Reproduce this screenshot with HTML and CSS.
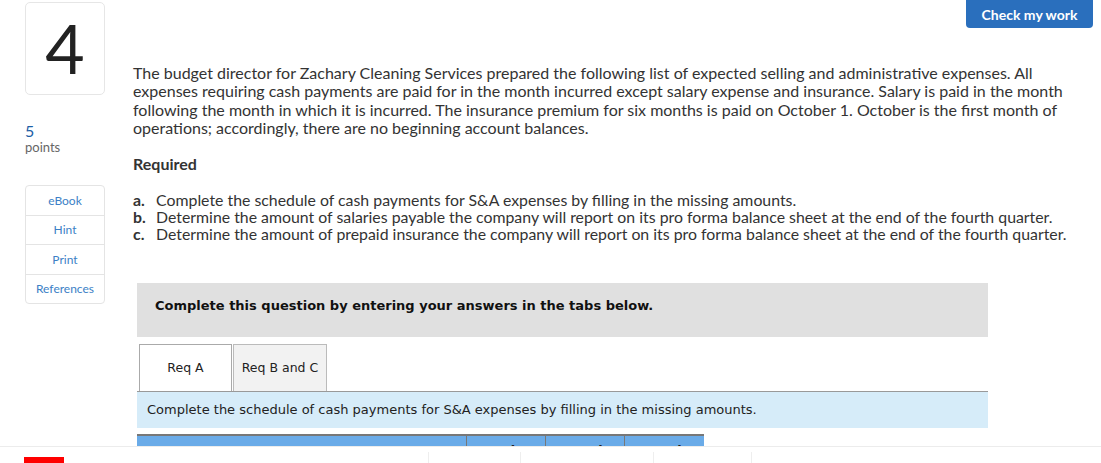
FILE: index.html
```html
<!DOCTYPE html>
<html>
<head>
<meta charset="utf-8">
<link rel="stylesheet" href="styles.css">
</head>
<body>
<div class="page">
  <aside class="side">
    <div class="qnum">4</div>
    <div class="pts"><span class="pts-n">5</span><span class="pts-l">points</span></div>
    <nav class="tools">
      <a class="tool">eBook</a>
      <a class="tool">Hint</a>
      <a class="tool">Print</a>
      <a class="tool">References</a>
    </nav>
  </aside>
  <main class="main">
    <div class="topbar"><button class="check">Check my work</button></div>
    <p class="intro">The budget director for Zachary Cleaning Services prepared the following list of expected selling and administrative expenses. All expenses requiring cash payments are paid for in the month incurred except salary expense and insurance. Salary is paid in the month following the month in which it is incurred. The insurance premium for six months is paid on October 1. October is the first month of operations; accordingly, there are no beginning account balances.</p>
    <h3 class="req">Required</h3>
    <ol class="reqs">
      <li><b>a.</b> Complete the schedule of cash payments for S&amp;A expenses by filling in the missing amounts.</li>
      <li><b>b.</b> Determine the amount of salaries payable the company will report on its pro forma balance sheet at the end of the fourth quarter.</li>
      <li><b>c.</b> Determine the amount of prepaid insurance the company will report on its pro forma balance sheet at the end of the fourth quarter.</li>
    </ol>
    <div class="work">
      <div class="notice">Complete this question by entering your answers in the tabs below.</div>
      <div class="tabs">
        <div class="tab active">Req A</div>
        <div class="tab">Req B and C</div>
      </div>
      <div class="instr">Complete the schedule of cash payments for S&amp;A expenses by filling in the missing amounts.</div>
      <table class="sched">
        <colgroup><col class="c0"><col class="cm"><col class="cm"><col class="cm"></colgroup>
        <tr><th></th><th>October</th><th>November</th><th>December</th></tr>
      </table>
    </div>
  </main>
</div>
<footer class="foot">
  <div class="brand"></div>
  <div class="fseg s1"></div>
  <div class="fseg s2"></div>
  <div class="fseg s3"></div>
  <div class="fseg s4"></div>
</footer>
</body>
</html>
```
FILE: styles.css
```css
html, body { margin: 0; padding: 0; background: #fff; }
body { font-family: "Lato", "Open Sans", sans-serif; color: #333; overflow: hidden; height: 463px; }
.page { display: flex; }
.side { width: 80px; padding-left: 25px; flex: none; padding-top: 2px; }
.qnum { box-sizing: border-box; height: 93px; border: 1px solid #e6e6e6; border-radius: 5px; display: flex; align-items: center; justify-content: center; font-size: 68px; font-weight: 400; color: #222; line-height: 1; padding-bottom: 2px; }
.pts { margin-top: 27px; display: flex; flex-direction: column; }
.pts-n { font-size: 16px; color: #1c5ea6; line-height: 17px; }
.pts-l { font-size: 13px; color: #666; line-height: 16px; }
.tools { margin-top: 30px; border: 1px solid #e4e4e4; border-radius: 4px; display: flex; flex-direction: column; }
.tool { height: 28.5px; display: flex; align-items: center; justify-content: center; font-size: 12px; color: #3c7fc6; border-top: 1px solid #e4e4e4; }
.tool:first-child { border-top: 0; }
.main { margin-left: 28px; width: 960px; flex: none; }
.topbar { display: flex; justify-content: flex-end; }
.check { width: 127px; height: 28px; border: 0; border-radius: 0 0 4px 4px; background: #2a6fbd; color: #fff; font-family: "Lato", sans-serif; font-weight: 700; font-size: 14px; padding: 0; }
.intro { margin: 36px 0 0 0; font-size: 16px; line-height: 18.3px; width: 945px; }
.req { margin: 18px 0 0 0; font-size: 16px; font-weight: 700; line-height: 18px; }
.reqs { list-style: none; margin: 17.5px 0 0 0; padding: 0; font-size: 15.85px; line-height: 17.3px; }
.reqs b { display: inline-block; width: 19px; }
.work { margin: 40px 0 0 4px; width: 851px; font-family: "DejaVu Sans", Verdana, sans-serif; }
.notice { background: #e0e0e0; height: 54px; box-sizing: border-box; padding: 15px 18px; font-weight: 700; font-size: 13px; color: #111; }
.tabs { display: flex; gap: 1px; margin-top: 7px; padding-left: 2px; border-bottom: 1px solid #999; }
.tab { box-sizing: border-box; width: 94px; height: 47px; border: 1px solid #bbb; border-bottom: 0; background: #f2f2f2; display: flex; align-items: center; justify-content: center; font-size: 12.5px; color: #222; }
.tab.active { background: #fff; border-color: #aaa; width: 93px; }
.instr { background: #d6ecf9; height: 36px; box-sizing: border-box; padding: 10px 10px; font-size: 13px; color: #222; }
.sched { margin-top: 6px; border-collapse: collapse; table-layout: fixed; width: 567px; }
.sched .c0 { width: 329px; }
.sched .cm { width: 79px; }
.sched th { background: #6aabe8; border-top: 2px solid #777; border-left: 1px solid #777; height: 30px; font-size: 13px; color: #222; padding: 0; overflow: hidden; white-space: nowrap; }
.sched th:first-child { border-left: 0; }
.foot { position: fixed; left: 0; right: 0; bottom: 0; height: 16px; background: #fff; border-top: 1px solid #ececec; }
.brand { position: absolute; left: 24px; top: 10px; width: 40px; height: 12px; background: #f00; }
.fseg { position: absolute; top: 5px; bottom: 0; width: 1px; background: #eee; }
.s1 { left: 428px; } .s2 { left: 520px; } .s3 { left: 653px; } .s4 { left: 751px; }
```
